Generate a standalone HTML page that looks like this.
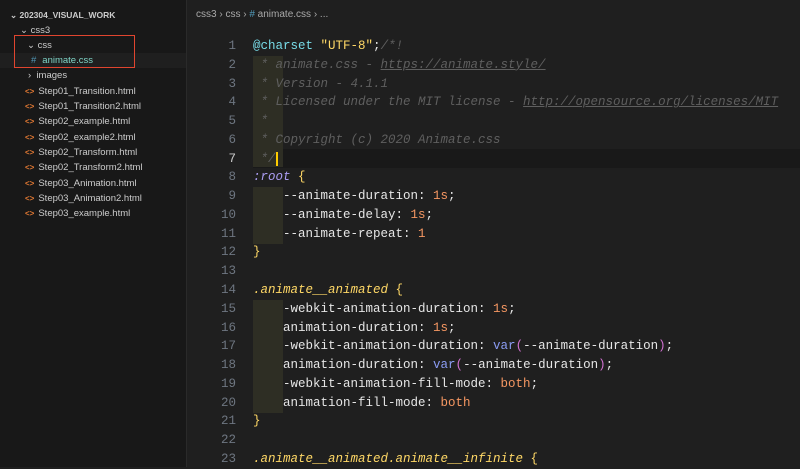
<!DOCTYPE html>
<html><head><meta charset="utf-8"><style>
body{margin:0;width:800px;height:467px;overflow:hidden;background:#1f1f1f;font-family:"Liberation Sans",sans-serif;position:relative}
#side{position:absolute;left:0;top:0;width:186px;height:467px;background:#181818;border-right:1px solid #2a2a2a}
.it{position:absolute;height:15px;line-height:15px;font-size:9.5px;color:#cccccc;white-space:nowrap}
.h{color:#e37933;font-size:8px;font-weight:bold;margin-right:4px}
#ed{position:absolute;left:187px;top:0;right:0;bottom:0}
.bc{position:absolute;top:9px;left:9px;font-size:10px;color:#a9a9a9}
.ln{position:absolute;left:0;width:49px;text-align:right;font-family:"Liberation Mono",monospace;font-size:12.5px;color:#6e7681;height:19px;line-height:19px}
.cd{position:absolute;left:66px;font-family:"Liberation Mono",monospace;font-size:12.5px;color:#e6e6e6;white-space:pre;height:19px;line-height:19px}
.c{color:#5f5f5f;font-style:italic}.y{color:#ffd866}.s{color:#ffd866}.n{color:#f59762}.p{color:#ab9df2;font-style:italic}.b{color:#78dce8}.v{color:#8b9cf4}.pk{color:#d070d0}
.g{position:absolute;background:#2e2e24}
</style></head><body>
<div id="side">
<div class="it" style="top:8px;left:10px;font-weight:bold;font-size:8.5px">⌄ 202304_VISUAL_WORK</div>
<div class="it" style="top:23px;left:20px">⌄ css3</div>
<div class="it" style="top:38px;left:27px">⌄ css</div>
<div style="position:absolute;top:53px;left:0;width:186px;height:15px;background:#1f1f1f"></div>
<div class="it" style="top:53px;left:31px;color:#7fd6c8"><span style="color:#519aba;margin-right:6px">#</span>animate.css</div>
<div style="position:absolute;left:14px;top:35px;width:119px;height:31px;border:1px solid #e0452f"></div>
<div class="it" style="top:68px;left:28px">›&nbsp; images</div>
<div class="it" style="top:84px;left:25px"><span class="h">&lt;&gt;</span>Step01_Transition.html</div>
<div class="it" style="top:99px;left:25px"><span class="h">&lt;&gt;</span>Step01_Transition2.html</div>
<div class="it" style="top:114px;left:25px"><span class="h">&lt;&gt;</span>Step02_example.html</div>
<div class="it" style="top:130px;left:25px"><span class="h">&lt;&gt;</span>Step02_example2.html</div>
<div class="it" style="top:145px;left:25px"><span class="h">&lt;&gt;</span>Step02_Transform.html</div>
<div class="it" style="top:160px;left:25px"><span class="h">&lt;&gt;</span>Step02_Transform2.html</div>
<div class="it" style="top:176px;left:25px"><span class="h">&lt;&gt;</span>Step03_Animation.html</div>
<div class="it" style="top:191px;left:25px"><span class="h">&lt;&gt;</span>Step03_Animation2.html</div>
<div class="it" style="top:206px;left:25px"><span class="h">&lt;&gt;</span>Step03_example.html</div>
</div>
<div id="ed">
<div class="bc">css3 › css › <span style="color:#519aba">#</span> animate.css › ...</div>
<div style="position:absolute;left:66px;right:0;top:149px;height:19px;background:#191919"></div>
<div class="g" style="left:66px;top:56px;width:30px;height:111px"></div>
<div class="g" style="left:66px;top:187px;width:30px;height:57px"></div>
<div class="g" style="left:66px;top:300px;width:30px;height:113px"></div>
<div id="lines"></div>
</div>
<script>
var L=[
'<span class="b">@charset</span> <span class="s">"UTF-8"</span>;<span class="c">/*!</span>',
'<span class="c"> * animate.css - <u>https://animate.style/</u></span>',
'<span class="c"> * Version - 4.1.1</span>',
'<span class="c"> * Licensed under the MIT license - <u>http://opensource.org/licenses/MIT</u></span>',
'<span class="c"> *</span>',
'<span class="c"> * Copyright (c) 2020 Animate.css</span>',
'<span class="c"> */</span><span style="border-left:2px solid #ffcc00"></span>',
'<span class="p">:root</span> <span class="y">{</span>',
'    --animate-duration: <span class="n">1s</span>;',
'    --animate-delay: <span class="n">1s</span>;',
'    --animate-repeat: <span class="n">1</span>',
'<span class="y">}</span>','',
'<span class="y"><i>.animate__animated</i> {</span>',
'    -webkit-animation-duration: <span class="n">1s</span>;',
'    animation-duration: <span class="n">1s</span>;',
'    -webkit-animation-duration: <span class="v">var</span><span class="pk">(</span>--animate-duration<span class="pk">)</span>;',
'    animation-duration: <span class="v">var</span><span class="pk">(</span>--animate-duration<span class="pk">)</span>;',
'    -webkit-animation-fill-mode: <span class="n">both</span>;',
'    animation-fill-mode: <span class="n">both</span>',
'<span class="y">}</span>','',
'<span class="y"><i>.animate__animated.animate__infinite</i> {</span>'];
var h='';for(var i=0;i<L.length;i++){var t=37+i*18.77;h+='<div class="ln" style="top:'+t+'px'+(i==6?';color:#ccc':'')+'">'+(i+1)+'</div><div class="cd" style="top:'+t+'px">'+L[i]+'</div>';}
document.getElementById('lines').innerHTML=h;
</script>
</body></html>
